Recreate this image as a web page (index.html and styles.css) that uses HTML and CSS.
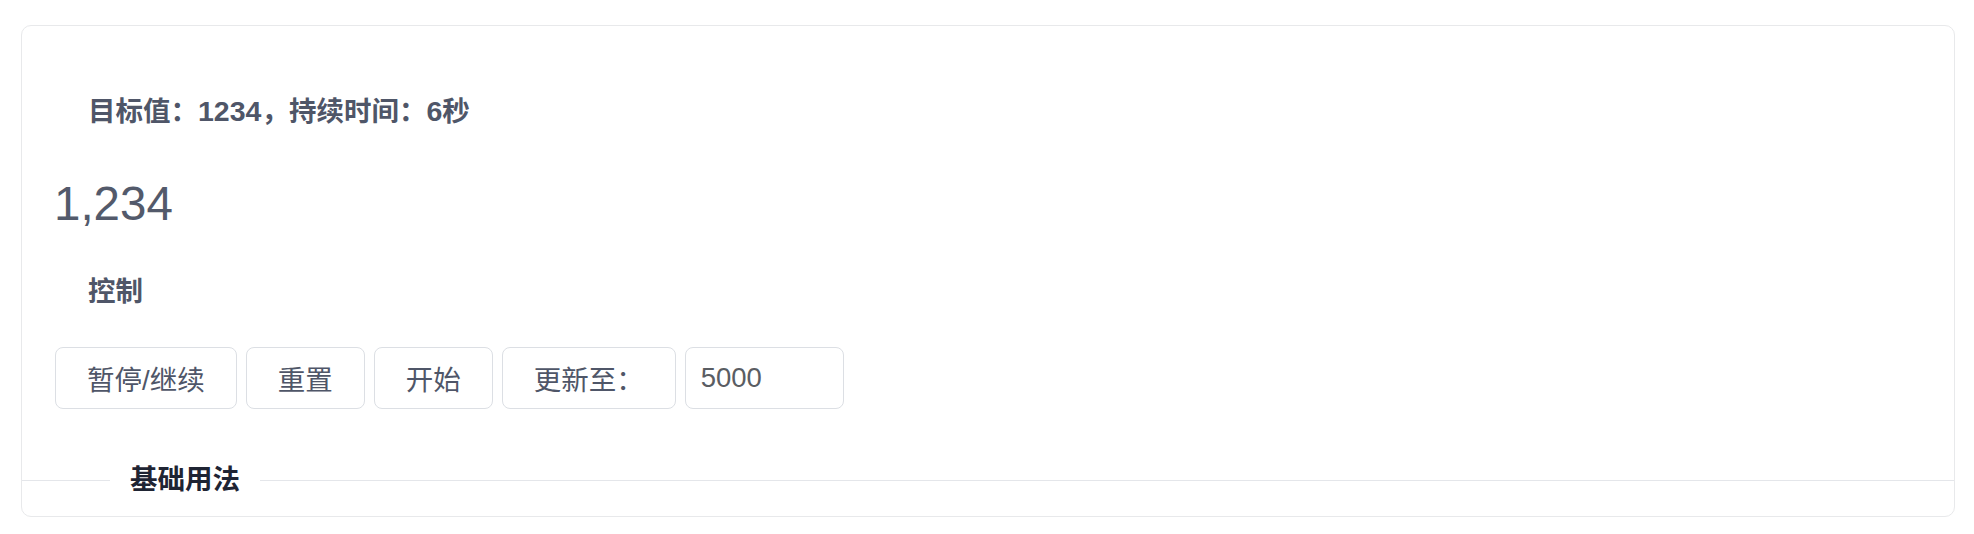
FILE: index.html
```html
<!DOCTYPE html>
<html lang="zh-CN">
<head>
<meta charset="utf-8">
<title>CountTo</title>
<link rel="stylesheet" href="styles.css">
</head>
<body>
<div class="page">
  <div class="card">
    <div class="demo">
      <div class="title">目标值：<b>1234</b>，持续时间：<b>6</b>秒</div>
      <div class="num">1,234</div>
      <div class="label">控制</div>
      <div class="controls">
        <button class="btn">暂停/继续</button>
        <button class="btn">重置</button>
        <button class="btn">开始</button>
        <button class="btn">更新至：</button>
        <input class="field" type="text" value="5000">
      </div>
    </div>
    <div class="divider"><span class="divider-text">基础用法</span></div>
  </div>
</div>
</body>
</html>
```

FILE: styles.css
```css
* { box-sizing: border-box; }

body {
  margin: 0;
  background: #ffffff;
  font-family: "Liberation Sans", "Noto Sans CJK SC", sans-serif;
}

.page {
  padding: 25px 19px 17px 21px;
}

.card {
  border: 1px solid #e8e9eb;
  border-radius: 10px;
  background: #fff;
  padding-bottom: 18px;
}

.demo {
  padding: 68px 33px 0 33px;
}

.title {
  height: 36px;
  padding-left: 33px;
  font-size: 27.5px;
  line-height: 36px;
  font-weight: 700;
  color: #4f5668;
}

.title b {
  font-weight: 700;
  font-size: 28.5px;
  line-height: 1;
}

.num {
  margin-top: 46px;
  margin-left: -1px;
  font-size: 47.5px;
  line-height: 56px;
  color: #535a6b;
}

.label {
  margin-top: 42px;
  padding-left: 33px;
  font-size: 27.5px;
  line-height: 36px;
  font-weight: 700;
  color: #4f5668;
}

.controls {
  margin-top: 37px;
  display: flex;
  gap: 9px;
}

.btn {
  height: 62px;
  padding: 0 31px;
  border: 1px solid #dcdfe4;
  border-radius: 8px;
  background: #fff;
  font-family: "Liberation Sans", "Noto Sans CJK SC", sans-serif;
  font-size: 27.5px;
  color: #4f5668;
  cursor: pointer;
}

.field {
  width: 159px;
  height: 62px;
  padding: 0 15px;
  border: 1px solid #dcdfe4;
  border-radius: 8px;
  font-family: "Liberation Sans", "Noto Sans CJK SC", sans-serif;
  font-size: 27.5px;
  color: #5a5d63;
  outline: none;
}

.divider {
  margin-top: 53px;
  display: flex;
  align-items: center;
  height: 36px;
}

.divider::before {
  content: "";
  width: 88px;
  height: 1px;
  background: #e4e6ea;
}

.divider::after {
  content: "";
  flex: 1;
  height: 1px;
  background: #e4e6ea;
}

.divider-text {
  padding: 0 20px;
  font-size: 27.5px;
  line-height: 36px;
  font-weight: 700;
  color: #1f2433;
}
```
